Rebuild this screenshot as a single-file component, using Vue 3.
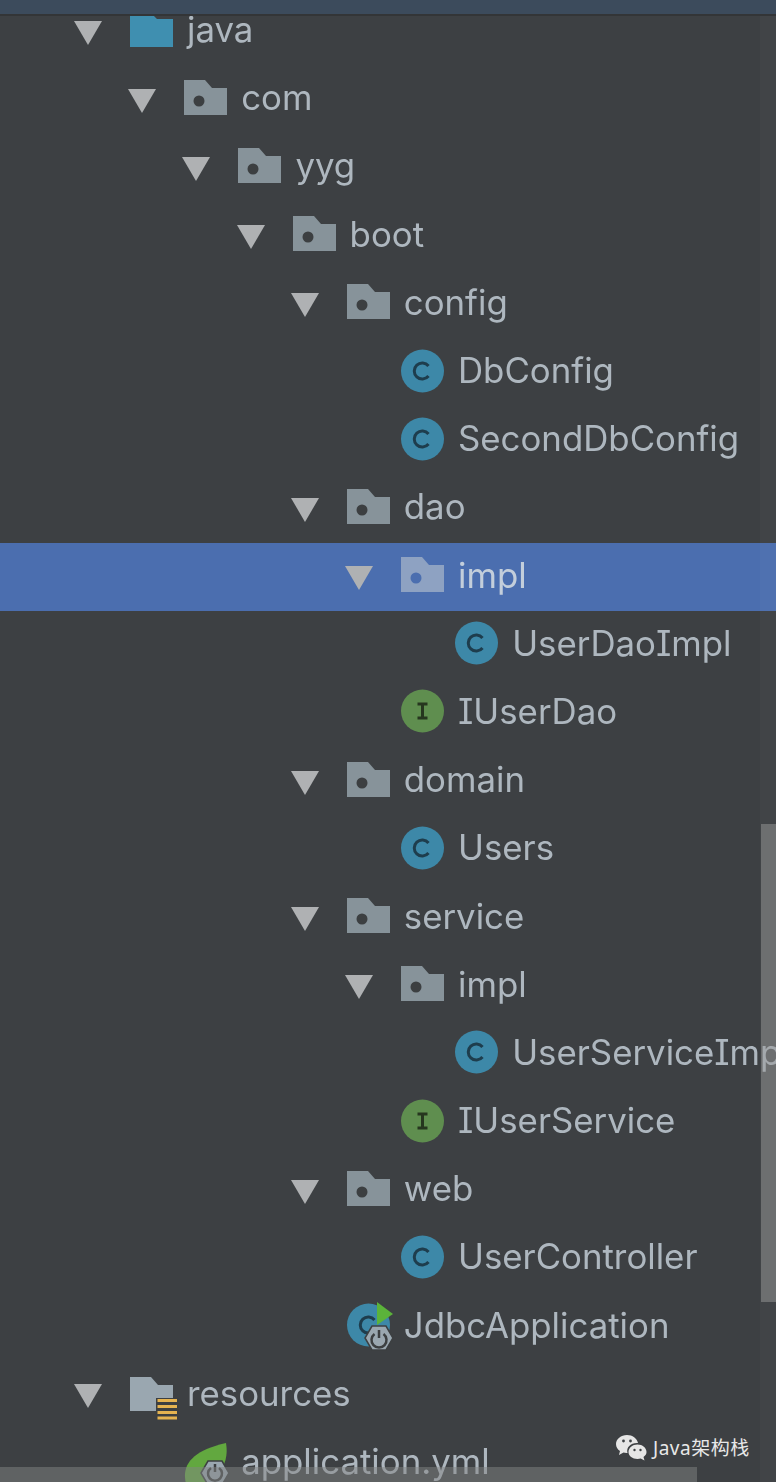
<script setup>
const rows = [
  { name: 'java', level: 0, open: true, icon: 'source' },
  { name: 'com', level: 1, open: true, icon: 'pkg' },
  { name: 'yyg', level: 2, open: true, icon: 'pkg' },
  { name: 'boot', level: 3, open: true, icon: 'pkg' },
  { name: 'config', level: 4, open: true, icon: 'pkg' },
  { name: 'DbConfig', level: 5, icon: 'class' },
  { name: 'SecondDbConfig', level: 5, icon: 'class' },
  { name: 'dao', level: 4, open: true, icon: 'pkg' },
  { name: 'impl', level: 5, open: true, icon: 'pkg', selected: true },
  { name: 'UserDaoImpl', level: 6, icon: 'class' },
  { name: 'IUserDao', level: 5, icon: 'iface' },
  { name: 'domain', level: 4, open: true, icon: 'pkg' },
  { name: 'Users', level: 5, icon: 'class' },
  { name: 'service', level: 4, open: true, icon: 'pkg' },
  { name: 'impl', level: 5, open: true, icon: 'pkg' },
  { name: 'UserServiceImpl', level: 6, icon: 'class' },
  { name: 'IUserService', level: 5, icon: 'iface' },
  { name: 'web', level: 4, open: true, icon: 'pkg' },
  { name: 'UserController', level: 5, icon: 'class' },
  { name: 'JdbcApplication', level: 4, icon: 'boot' },
  { name: 'resources', level: 0, open: true, icon: 'res' },
  { name: 'application.yml', level: 1, icon: 'yml' },
]
const indent = (level) => ({ paddingLeft: `${130 + level * 54.2}px` })
</script>

<template>
  <div class="page">
    <div class="topbar"></div>
    <div class="tree">
      <div
        v-for="(row, i) in rows"
        :key="i"
        class="row"
        :class="{ selected: row.selected }"
        :style="indent(row.level)"
      >
        <svg v-if="row.open" class="arrow" width="28" height="26" viewBox="0 0 28 26">
          <path d="M0 1H28L14 25Z" fill="#afb1b3" />
        </svg>
        <svg class="icon" width="50" height="50" viewBox="0 0 50 50">
          <template v-if="row.icon === 'source'">
            <path d="M0 7H20L27 14H43V42H0Z" fill="#3f8fb0" />
          </template>
          <template v-else-if="row.icon === 'pkg'">
            <path d="M0 7H21L28 15H43V42H0Z" :fill="row.selected ? '#8ea2c2' : '#87939a'" />
            <circle cx="15" cy="28" r="5.5" :fill="row.selected ? '#4b6eaf' : '#3c3f41'" />
          </template>
          <template v-else-if="row.icon === 'class'">
            <circle cx="21.5" cy="25" r="21.5" fill="#3d88a8" />
            <path d="M27.500 20A8 8 0 1 0 27.500 30" fill="none" stroke="#1e3d4d" stroke-width="3" />
          </template>
          <template v-else-if="row.icon === 'iface'">
            <circle cx="21.5" cy="25" r="21.5" fill="#5f8e4f" />
            <path d="M16.500 18H26.500M21.500 18V32M16.500 32H26.500" fill="none" stroke="#26361f" stroke-width="3" />
          </template>
          <template v-else-if="row.icon === 'boot'">
            <circle cx="21.5" cy="25" r="21.5" fill="#3d88a8" />
            <path d="M27.500 20A8 8 0 1 0 27.500 30" fill="none" stroke="#1e3d4d" stroke-width="3" />
            <path d="M30 2L46 14L30 25Z" fill="#5bb33a" />
            <path d="M25 26H39L46 38L39 50H25L18 38Z" fill="#9aa7b0" stroke="#3c3f41" stroke-width="1.500" />
            <path d="M27.500 34A7.500 7.500 0 1 0 36.500 34M32 30V38" fill="none" stroke="#3c3f41" stroke-width="2.500" />
          </template>
          <template v-else-if="row.icon === 'res'">
            <path d="M0 9H21L28 17H43V43H0Z" fill="#9aa7b0" />
            <path d="M26 30H49V51H26Z" fill="#3c3f41" />
            <path d="M27.500 32.500H47M27.500 38.500H47M27.500 44.500H47M27.500 50H47" fill="none" stroke="#e5b350" stroke-width="3.200" />
          </template>
          <template v-else>
            <path d="M3 50C-4 30 6 14 42 6C45 24 38 34 24 50Z" fill="#62a83f" />
            <path d="M24 24H38L45 36L38 48H24L17 36Z" fill="#9aa7b0" stroke="#3c3f41" stroke-width="1.500" />
            <path d="M27 31A7 7 0 1 0 35 31M31 27V35" fill="none" stroke="#3c3f41" stroke-width="2.500" />
          </template>
        </svg>
        <span class="label">{{ row.name }}</span>
      </div>
    </div>
    <div class="vscroll"><div class="vthumb"></div></div>
    <div class="hscroll"></div>
    <div class="mark">
      <svg width="31" height="26" viewBox="0 0 31 26">
        <path d="M11 0C5 0 0 4 0 9C0 12 1.600 14.500 4 16L3 20L7.500 17.600C8.600 18 10 18.100 11.500 18C10 12 15 7.500 22 8C21 3.500 16.500 0 11 0Z" fill="#e6e6e6" />
        <path d="M21.500 9.500C16.500 9.500 12.500 13 12.500 17C12.500 21 16.500 24 21.500 24C22.700 24 23.700 23.800 24.700 23.500L28.500 25.500L27.500 22C29.500 20.500 30.500 19 30.500 17C30.500 13 26.500 9.500 21.500 9.500Z" fill="#e6e6e6" />
        <circle cx="7.500" cy="6" r="1.400" fill="#3e4245" />
        <circle cx="14.500" cy="6" r="1.400" fill="#3e4245" />
        <circle cx="18.500" cy="15" r="1.200" fill="#3e4245" />
        <circle cx="24.500" cy="15" r="1.200" fill="#3e4245" />
      </svg>
      <span>Java架构栈</span>
    </div>
  </div>
</template>

<style>
html, body { margin: 0; background: #3c3f41; }
</style>

<style scoped>
.page {
  position: relative;
  width: 776px;
  height: 1482px;
  overflow: hidden;
  background: #3d4043;
  font-family: "Inter", "Open Sans", sans-serif;
}
.topbar {
  position: relative;
  z-index: 2;
  height: 14px;
  background: #3c4b5c;
  border-bottom: 2px solid #333537;
}
.tree {
  margin-top: -19px;
  filter: blur(0.7px);
}
.row {
  position: relative;
  display: flex;
  align-items: center;
  height: 68.2px;
  box-sizing: border-box;
  color: #aeb7bf;
  font-size: 34.8px;
  font-feature-settings: "cv08" 1;
  white-space: nowrap;
}
.row.selected {
  background: #4b6eaf;
  color: #c3cedb;
}
.arrow {
  position: absolute;
  margin-left: -56px;
  margin-top: 3px;
}
.icon {
  flex: none;
  width: 50px;
  height: 50px;
  margin-right: 7px;
  margin-top: -3px;
  overflow: visible;
}
.label {
  line-height: 68px;
  margin-top: -4px;
}
.vscroll {
  position: absolute;
  z-index: 1;
  top: 16px;
  right: 0;
  bottom: 0;
  width: 16px;
  background: rgba(255, 255, 255, 0.025);
}
.vthumb {
  position: absolute;
  top: 808px;
  left: 1px;
  right: 0;
  height: 478px;
  background: rgba(154, 154, 154, 0.5);
}
.hscroll {
  position: absolute;
  z-index: 1;
  left: 0;
  bottom: 0;
  width: 697px;
  height: 15px;
  background: rgba(130, 132, 132, 0.5);
}
.mark {
  position: absolute;
  z-index: 3;
  left: 616px;
  top: 1435px;
  display: flex;
  align-items: center;
  gap: 6px;
  color: #e8e8e8;
  font-family: "Noto Sans", "Noto Sans CJK SC", sans-serif;
  font-size: 19px;
  letter-spacing: 0.5px;
  line-height: 26px;
}
</style>
